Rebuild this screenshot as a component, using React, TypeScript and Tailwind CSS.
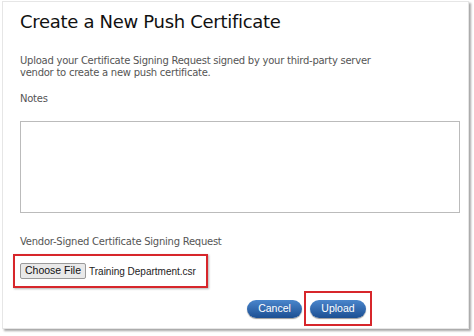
export default function App() {
  return (
    <div className="h-[336px] w-[474px] bg-white">
      <div className="ml-[2px] mt-[1px] flex h-[328px] w-[467px] flex-col border border-[#e6e6e6] bg-white px-[17px] shadow-[2px_2px_2px_rgba(0,0,0,0.35)] [font-family:'DejaVu_Sans',sans-serif]">
        <h1 className="mt-[8px] text-[18px] leading-[24px] tracking-[-0.3px] text-[#111]">
          Create a New Push Certificate
        </h1>
        <p className="mt-[21px] text-[10px] leading-[12px] tracking-[-0.25px] text-[#555]">
          Upload your Certificate Signing Request signed by your third-party server
          <br />
          vendor to create a new push certificate.
        </p>
        <div className="mt-[14px] text-[10px] leading-[12px] tracking-[-0.25px] text-[#555]">Notes</div>
        <textarea className="mt-[16px] h-[92px] w-[440px] resize-none border border-[#bbb] outline-none" />
        <div className="mt-[23px] text-[10px] leading-[12px] tracking-[-0.25px] text-[#555]">
          Vendor-Signed Certificate Signing Request
        </div>
        {/* file picker, highlighted */}
        <div className="ml-[-7px] mt-[6px] flex h-[34px] w-[195px] items-center whitespace-nowrap border-2 border-[#d7262b] pl-[5px] shadow-[1px_1px_2px_rgba(0,0,0,0.3)] [font-family:'Liberation_Sans',sans-serif]">
          <span className="flex h-[16px] w-[66px] shrink-0 items-center justify-center rounded-[2px] border border-[#9a9a9a] bg-[#e9e9e9] text-[10.5px] text-[#111]">
            Choose File
          </span>
          <span className="ml-[3px] text-[10px] text-[#222]">Training Department.csr</span>
        </div>
        <div className="mt-[3px] flex items-center pl-[227px] [font-family:'Liberation_Sans',sans-serif]">
          <button className="flex h-[18px] w-[55px] items-center justify-center rounded-full bg-gradient-to-b from-[#4a86cc] to-[#1c4f93] text-[10.5px] text-white shadow-[0_1px_1px_rgba(0,0,0,0.4)]">
            Cancel
          </button>
          <div className="ml-[2px] flex h-[35px] w-[68px] items-center justify-center border-2 border-[#d7262b]">
            <button className="flex h-[18px] w-[56px] items-center justify-center rounded-full bg-gradient-to-b from-[#4a86cc] to-[#1c4f93] text-[10.5px] text-white shadow-[0_1px_1px_rgba(0,0,0,0.4)]">
              Upload
            </button>
          </div>
        </div>
      </div>
    </div>
  );
}
